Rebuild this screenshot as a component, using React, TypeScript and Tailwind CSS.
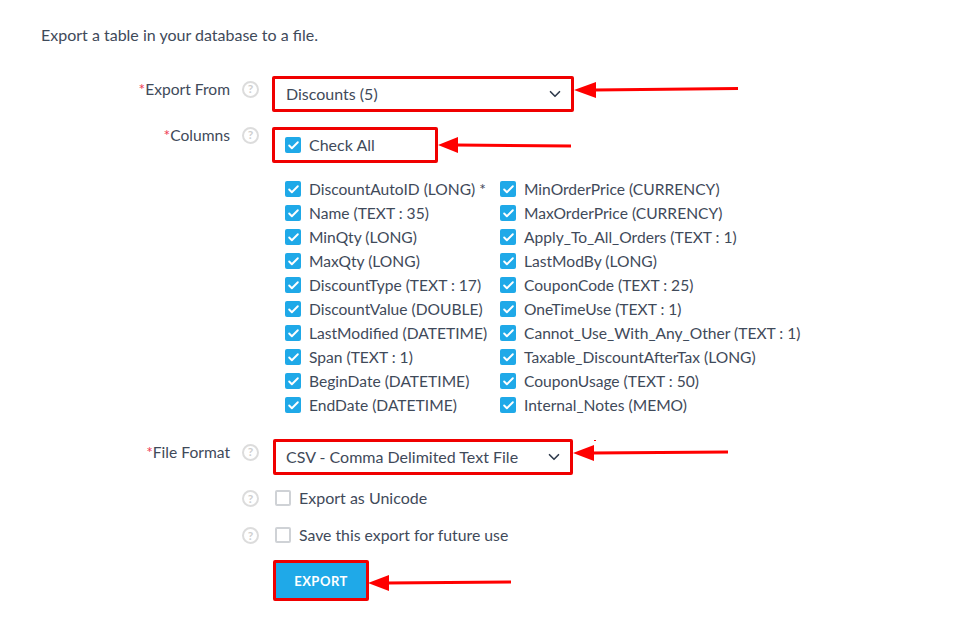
import { ChevronDown, Check } from "lucide-react"

const leftColumns = [
  "DiscountAutoID (LONG) *",
  "Name (TEXT : 35)",
  "MinQty (LONG)",
  "MaxQty (LONG)",
  "DiscountType (TEXT : 17)",
  "DiscountValue (DOUBLE)",
  "LastModified (DATETIME)",
  "Span (TEXT : 1)",
  "BeginDate (DATETIME)",
  "EndDate (DATETIME)",
]

const rightColumns = [
  "MinOrderPrice (CURRENCY)",
  "MaxOrderPrice (CURRENCY)",
  "Apply_To_All_Orders (TEXT : 1)",
  "LastModBy (LONG)",
  "CouponCode (TEXT : 25)",
  "OneTimeUse (TEXT : 1)",
  "Cannot_Use_With_Any_Other (TEXT : 1)",
  "Taxable_DiscountAfterTax (LONG)",
  "CouponUsage (TEXT : 50)",
  "Internal_Notes (MEMO)",
]

function Help() {
  return (
    <span className="flex h-[17px] w-[17px] shrink-0 items-center justify-center rounded-full border-2 border-[#dcdcdc] text-[12px] font-bold leading-none text-[#cfcfcf]">
      ?
    </span>
  )
}

function Label({ text, top }: { text?: string; top: string }) {
  return (
    <div className={`flex w-[272px] shrink-0 items-start ${top}`}>
      <div className="w-[230px] text-right text-[15.6px] leading-[20px] text-[#3f4a5a]">
        {text && (
          <>
            <span className="text-[#ef4056]">*</span>
            {text}
          </>
        )}
      </div>
      <div className="ml-[12px] mt-[1.5px]">
        <Help />
      </div>
    </div>
  )
}

function Checked({ text }: { text: string }) {
  return (
    <div className="flex h-6 items-center gap-2 whitespace-nowrap">
      <span className="flex h-4 w-4 shrink-0 items-center justify-center rounded-[2px] bg-[#1fa9e8]">
        <Check size={13} strokeWidth={3.5} color="white" />
      </span>
      <span>{text}</span>
    </div>
  )
}

function Unchecked({ text }: { text: string }) {
  return (
    <div className="flex items-center gap-2">
      <span className="h-4 w-4 shrink-0 rounded-[2px] border-2 border-[#cfd2d6] bg-white" />
      <span>{text}</span>
    </div>
  )
}

function SelectBox({ text, box }: { text: string; box: string }) {
  return (
    <div className={`flex h-[36px] items-center justify-between rounded-[2px] border-[3px] border-[#f00000] pr-[7px] ${box}`}>
      <span>{text}</span>
      <ChevronDown size={18} strokeWidth={2.2} color="#2f3b4c" />
    </div>
  )
}

// hand drawn red annotation arrows, tip on the left
function Arrow({ tip, y, base, endX, endY }: { tip: number; y: number; base: number; endX: number; endY: number }) {
  return (
    <g>
      <line x1={base - 2} y1={y} x2={endX} y2={endY} stroke="#ff0000" strokeWidth="3" />
      <polygon points={`${tip},${y} ${base},${y - 8} ${base},${y + 8}`} fill="#ff0000" />
    </g>
  )
}

export default function App() {
  return (
    <div className="relative h-[638px] w-[954px] overflow-hidden bg-white text-[16px] leading-[20px] text-[#3f4a5a] [font-family:Lato,sans-serif]">
      <p className="pl-[41px] pt-[25px]">Export a table in your database to a file.</p>

      <div className="mt-[31px] flex">
        <Label text="Export From" top="pt-[3px]" />
        <SelectBox text="Discounts (5)" box="w-[302px] pl-[11px]" />
      </div>

      <div className="mt-[15px] flex">
        <Label text="Columns" top="-mt-[2px]" />
        <div>
          <div className="flex h-[36px] w-[166px] items-center rounded-[2px] border-[3px] border-[#f00000] pl-[10px]">
            <Checked text="Check All" />
          </div>
          <div className="ml-[13px] mt-[14px] flex text-[15.6px]">
            <div className="w-[215px]">
              {leftColumns.map((c) => (
                <Checked key={c} text={c} />
              ))}
            </div>
            <div>
              {rightColumns.map((c) => (
                <Checked key={c} text={c} />
              ))}
            </div>
          </div>
        </div>
      </div>

      <div className="mt-[22px] flex">
        <Label text="File Format" top="pt-[3px]" />
        <div className="pl-px">
          <SelectBox text="CSV - Comma Delimited Text File" box="w-[300px] pl-[10px]" />
        </div>
      </div>

      <div className="mt-[13px] flex items-center">
        <Label top="pt-0" />
        <div className="pl-[3px]">
          <Unchecked text="Export as Unicode" />
        </div>
      </div>

      <div className="mt-[17px] flex items-center">
        <Label top="pt-0" />
        <div className="pl-[3px] text-[15.8px]">
          <Unchecked text="Save this export for future use" />
        </div>
      </div>

      <div className="ml-[273px] mt-[15px] flex h-[41px] w-[96px] items-center justify-center rounded-[2px] border-[3px] border-[#f00000] bg-[#1fa9e8] text-[13px] font-bold tracking-[0.5px] text-white">
        EXPORT
      </div>

      <svg className="pointer-events-none absolute left-0 top-0" width="954" height="638">
        <Arrow tip={574} y={90} base={596} endX={738} endY={88.5} />
        <Arrow tip={438} y={145} base={458} endX={571} endY={146} />
        <Arrow tip={573} y={453} base={594} endX={728} endY={452} />
        <Arrow tip={368} y={583} base={389} endX={511} endY={582} />
        <rect x="594" y="440" width="2" height="1" fill="#ff0000" />
      </svg>
    </div>
  )
}
